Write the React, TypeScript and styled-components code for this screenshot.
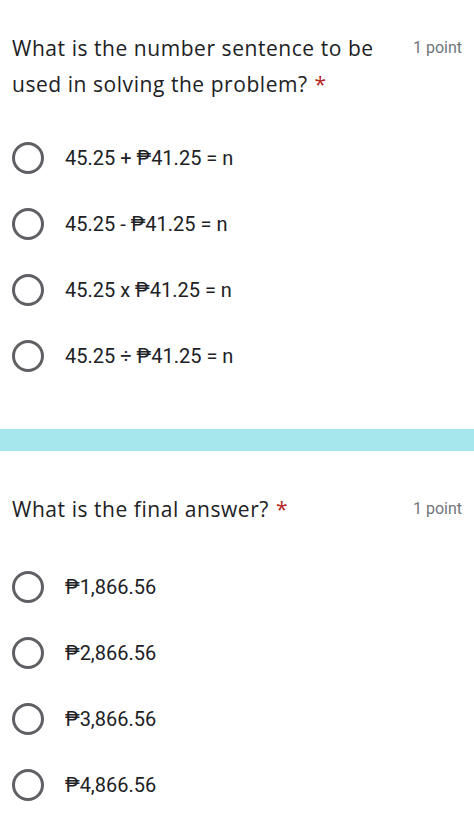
import React from "react";
import styled, { createGlobalStyle } from "styled-components";

const Global = createGlobalStyle`
  html, body { margin: 0; padding: 0; background: #ffffff; }
  body { font-family: Roboto, "Liberation Sans", sans-serif; }
`;

const Page = styled.div`
  width: 474px;
  display: flex;
  flex-direction: column;
  background: #ffffff;
`;

const Question = styled.section<{ $top: number; $gap: number; $bottom: number }>`
  display: flex;
  flex-direction: column;
  padding: ${(p) => p.$top}px 12px ${(p) => p.$bottom}px 12px;
  gap: ${(p) => p.$gap}px;
`;

const Header = styled.div`
  display: flex;
  justify-content: space-between;
  align-items: flex-start;
  gap: 24px;
`;

const Title = styled.div`
  font-family: "Open Sans", Roboto, sans-serif;
  font-size: 21px;
  line-height: 36px;
  color: #202124;
  letter-spacing: 0.55px;
`;

const Star = styled.span`
  color: #b3261e;
  padding-left: 7px;
  letter-spacing: 0;
`;

const Points = styled.div`
  font-family: Roboto, sans-serif;
  font-size: 16px;
  line-height: 36px;
  color: #70757a;
  white-space: nowrap;
`;

const Options = styled.div`
  display: flex;
  flex-direction: column;
`;

const Option = styled.label`
  display: flex;
  align-items: center;
  height: 66px;
  gap: 21px;
`;

const Radio = styled.span`
  width: 32px;
  height: 32px;
  box-sizing: border-box;
  border: 3px solid #5f6064;
  border-radius: 50%;
  flex: none;
`;

const OptionText = styled.span`
  font-family: Roboto, "DejaVu Sans", sans-serif;
  font-size: 20px;
  color: #202124;
`;

const Divider = styled.div`
  height: 22px;
  background: #a6e7ee;
`;

const q1 = [
  "45.25 + ₱41.25 = n",
  "45.25 - ₱41.25 = n",
  "45.25 x ₱41.25 = n",
  "45.25 ÷ ₱41.25 = n",
];
const q2 = ["₱1,866.56", "₱2,866.56", "₱3,866.56", "₱4,866.56"];

export default function App() {
  return (
    <Page>
      <Global />
      <Question $top={30} $gap={23} $bottom={40}>
        <Header>
          <Title>
            What is the number sentence to be used in solving the problem?
            <Star>*</Star>
          </Title>
          <Points>1 point</Points>
        </Header>
        <Options>
          {q1.map((t) => (
            <Option key={t}>
              <Radio />
              <OptionText>{t}</OptionText>
            </Option>
          ))}
        </Options>
      </Question>
      <Divider />
      <Question $top={40} $gap={27} $bottom={20}>
        <Header>
          <Title>
            What is the final answer?<Star>*</Star>
          </Title>
          <Points>1 point</Points>
        </Header>
        <Options>
          {q2.map((t) => (
            <Option key={t}>
              <Radio />
              <OptionText>{t}</OptionText>
            </Option>
          ))}
        </Options>
      </Question>
    </Page>
  );
}
